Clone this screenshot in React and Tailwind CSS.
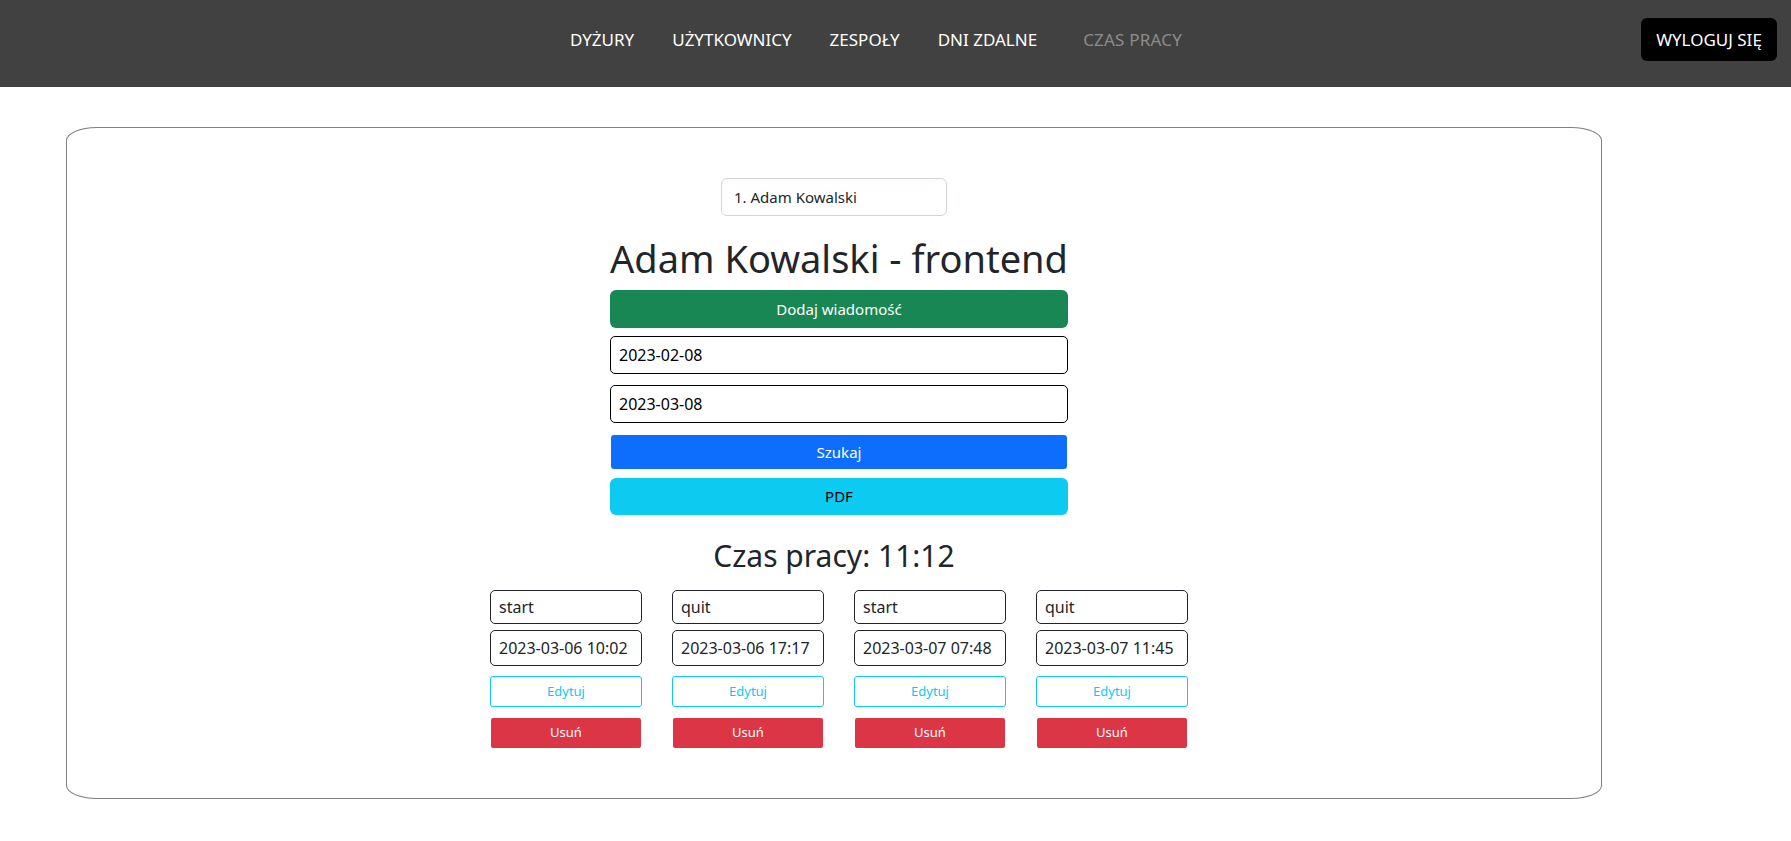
import React from 'react';

const font = { fontFamily: '"Noto Sans", "Open Sans", sans-serif' };

const navLinks = ['DYŻURY', 'UŻYTKOWNICY', 'ZESPOŁY', 'DNI ZDALNE'];

const events = [
    { type: 'start', time: '2023-03-06 10:02' },
    { type: 'quit', time: '2023-03-06 17:17' },
    { type: 'start', time: '2023-03-07 07:48' },
    { type: 'quit', time: '2023-03-07 11:45' },
];

const EventCard = ({ type, time }) => (
    <div className="flex flex-col w-[152px]">
        <input
            readOnly
            value={type}
            className="h-[34px] border border-[#212529] rounded-[5px] px-2 text-[16px] text-[#212529] outline-none"
        />
        <input
            readOnly
            value={time}
            className="h-[36px] mt-[6px] border border-[#212529] rounded-[5px] px-2 text-[16px] text-[#212529] outline-none"
        />
        <button className="h-[31px] mt-[10px] border border-[#0dcaf0] rounded-[3px] text-[#0dcaf0] text-[13px] bg-white">
            Edytuj
        </button>
        <button className="h-[30px] mt-[11px] mx-px bg-[#dc3545] rounded-[2px] text-white text-[13px]">
            Usuń
        </button>
    </div>
);

export default function App() {
    return (
        <div className="min-h-screen bg-white" style={font}>
            {/* Top bar */}
            <div className="h-[87px] bg-[#414141] flex items-center pb-[8px]">
                <nav className="flex items-center pl-[551px]">
                    {navLinks.map((link) => (
                        <a key={link} className="px-[19px] text-white text-[17px] cursor-pointer">
                            {link}
                        </a>
                    ))}
                    <a className="pl-[27px] pr-[19px] text-[#8c8c8c] text-[17px] tracking-[0.2px]">CZAS PRACY</a>
                </nav>
                <button className="ml-auto mr-[14px] w-[136px] h-[43px] bg-black rounded-md text-white text-[17px]">
                    WYLOGUJ SIĘ
                </button>
            </div>

            {/* Card */}
            <div className="mt-[40px] ml-[66px] w-[1536px] h-[672px] border border-[#808080] rounded-[2%] flex flex-col items-center pt-[50px]">
                <select className="w-[226px] h-[38px] border border-[#ced4da] rounded-md px-3 text-[15px] text-[#212529] appearance-none bg-white">
                    <option>1. Adam Kowalski</option>
                </select>

                <h1 className="ml-[10px] mt-[18px] text-[38px] leading-[48px] text-[#212529]">Adam Kowalski - frontend</h1>

                <div className="ml-[10px] mt-[8px] w-[458px] flex flex-col">
                    <button className="h-[38px] bg-[#198754] rounded-md text-white text-[15px]">Dodaj wiadomość</button>
                    <input
                        readOnly
                        value="2023-02-08"
                        className="mt-[8px] h-[38px] border border-black rounded-[5px] px-2 text-[16px] text-black outline-none"
                    />
                    <input
                        readOnly
                        value="2023-03-08"
                        className="mt-[11px] h-[38px] border border-black rounded-[5px] px-2 text-[16px] text-black outline-none"
                    />
                    <button className="mt-[12px] mx-px h-[34px] bg-[#0d6efd] rounded-[3px] text-white text-[15px]">Szukaj</button>
                    <button className="mt-[9px] h-[37px] bg-[#0dcaf0] rounded-md text-black text-[15px]">PDF</button>
                </div>

                <h2 className="mt-[22px] text-[30px] leading-[38px] text-[#212529]">Czas pracy: 11:12</h2>

                <div className="ml-[10px] mt-[15px] flex gap-[30px]">
                    {events.map((e, i) => (
                        <EventCard key={i} {...e} />
                    ))}
                </div>
            </div>
        </div>
    );
}
